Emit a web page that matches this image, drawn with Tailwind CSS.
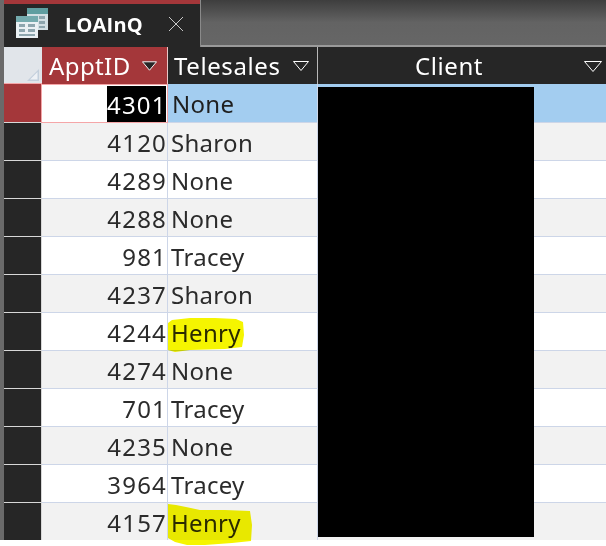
<!DOCTYPE html>
<html><head><meta charset="utf-8"><script src="https://cdn.jsdelivr.net/npm/@tailwindcss/browser@4"></script></head>
<body class="bg-white">
<div class="relative w-[606px] h-[546px] overflow-hidden bg-white font-['Noto_Sans',sans-serif] text-[24px] text-[#2b2b2b]">
  <div class="flex h-[47px] bg-[#636363]">
    <div class="w-[4px] bg-[#6a6a6a]"></div>
    <div class="w-[197px] flex flex-col border-r border-[#8a8a8a]">
      <div class="h-[4px] bg-[#a4373a]"></div>
      <div class="flex-1 bg-[#262626] relative">
        <svg class="absolute left-[11px] top-[4px]" width="34" height="32" viewBox="0 0 34 32">
          <rect x="12" y="0" width="21" height="22" fill="#d3e0e4"/><rect x="12" y="0" width="21" height="6" fill="#5f9ea0"/>
          <path d="M24 8h6v3h-6zM24 13h6v3h-6zM24 18h6v2h-6z" fill="#8ea6ae"/>
          <rect x="1" y="8" width="22" height="22" fill="#eaf0f3"/><rect x="1" y="8" width="22" height="6" fill="#5f9ea0" fill-opacity="0.85"/>
          <path d="M4 16h6v3h-6zM13 16h7v3h-7zM4 21h6v3h-6zM13 21h7v3h-7zM4 26h16v2H4z" fill="#8ea6ae"/>
        </svg>
        <span class="absolute left-[61px] top-[7px] text-[20px] leading-[28px] font-bold tracking-[0.2px] text-white font-['Open_Sans',sans-serif]">LOAInQ</span>
        <svg class="absolute left-[164px] top-[12px]" width="16" height="16" viewBox="0 0 16 16" fill="none" stroke="#c8c8c8" stroke-width="1"><path d="M1 1l14 14M15 1L1 15"/></svg>
      </div>
    </div>
    <div class="flex-1 bg-gradient-to-b from-[#3e3e3e] via-[#636363] to-[#666666] border-b-2 border-[#9a9a9a]"></div>
  </div>

  <div class="flex h-[37px] text-white bg-[#262626] tracking-[0.6px]">
    <div class="w-[4px] bg-[#6a6a6a]"></div>
    <div class="w-[38px] bg-[#e1e5ea] relative border-b border-[#f5a6a8]">
      <svg class="absolute right-[3px] bottom-[2px]" width="12" height="12" viewBox="0 0 12 12"><path d="M12 0V12H0Z" fill="#c3cfdc"/><path d="M10.5 3V10.5H3Z" fill="#eef1f5"/></svg>
    </div>
    <div class="w-[126px] bg-[#a4373a] flex items-center justify-between pl-[7px] pr-[10px] border-r border-[#e8c8c8]">
      <span class="tracking-[0.4px]">ApptID</span>
      <svg width="15" height="10" viewBox="0 0 16 10"><path d="M0.5 0.5H15.5L8 9.5Z" fill="#262626" stroke="#fff"/></svg>
    </div>
    <div class="w-[150px] flex items-center justify-between pl-[6px] pr-[8px] border-r border-[#b8b8b8]">
      <span>Telesales</span>
      <svg width="16" height="10" viewBox="0 0 16 10"><path d="M0.5 0.5H15.5L8 9.5Z" fill="#262626" stroke="#fff"/></svg>
    </div>
    <div class="flex-1 relative flex items-center justify-center pr-[26px]">
      <span>Client</span>
      <svg class="absolute right-[4px] top-[14px]" width="18" height="11" viewBox="0 0 18 11"><path d="M0.5 0.5H17.5L9 10.5Z" fill="#262626" stroke="#fff"/></svg>
    </div>
  </div>

  <div class="flex flex-col tracking-[0.3px]">
    <div class="flex h-[39px] bg-[#a3cdf0]">
      <div class="w-[4px] bg-[#6a6a6a]"></div>
      <div class="w-[37px] bg-[#a4373a] border-b border-[#d8d8d8]"></div>
      <div class="w-[127px] bg-white border border-[#f5a6a8] flex justify-end items-end text-white pr-[1px]"><span class="bg-black w-[59px] h-[36px] leading-[37px] text-right tracking-[1.2px]">4301</span></div>
      <div class="w-[150px] pl-[4px] pt-[1px] leading-[38px] text-[#1f1f1f] border-r border-b border-[#cdd6e8]">None</div>
      <div class="flex-1 border-b border-[#cdd6e8]"></div>
    </div>
    <div class="flex h-[38px] bg-[#f2f2f2]">
      <div class="w-[4px] bg-[#6a6a6a]"></div><div class="w-[38px] bg-[#262626] border-r border-b border-[#d8d8d8]"></div>
      <div class="w-[126px] border-r border-b border-[#cdd6e8] text-right leading-[39px] tracking-[1.2px]">4120</div>
      <div class="w-[150px] pl-[3px] leading-[39px] border-r border-b border-[#cdd6e8]">Sharon</div><div class="flex-1 border-b border-[#cdd6e8]"></div>
    </div>
    <div class="flex h-[38px] bg-white">
      <div class="w-[4px] bg-[#6a6a6a]"></div><div class="w-[38px] bg-[#262626] border-r border-b border-[#d8d8d8]"></div>
      <div class="w-[126px] border-r border-b border-[#cdd6e8] text-right leading-[39px] tracking-[1.2px]">4289</div>
      <div class="w-[150px] pl-[3px] leading-[39px] border-r border-b border-[#cdd6e8]">None</div><div class="flex-1 border-b border-[#cdd6e8]"></div>
    </div>
    <div class="flex h-[38px] bg-[#f2f2f2]">
      <div class="w-[4px] bg-[#6a6a6a]"></div><div class="w-[38px] bg-[#262626] border-r border-b border-[#d8d8d8]"></div>
      <div class="w-[126px] border-r border-b border-[#cdd6e8] text-right leading-[39px] tracking-[1.2px]">4288</div>
      <div class="w-[150px] pl-[3px] leading-[39px] border-r border-b border-[#cdd6e8]">None</div><div class="flex-1 border-b border-[#cdd6e8]"></div>
    </div>
    <div class="flex h-[38px] bg-white">
      <div class="w-[4px] bg-[#6a6a6a]"></div><div class="w-[38px] bg-[#262626] border-r border-b border-[#d8d8d8]"></div>
      <div class="w-[126px] border-r border-b border-[#cdd6e8] text-right leading-[39px] tracking-[1.2px]">981</div>
      <div class="w-[150px] pl-[3px] leading-[39px] border-r border-b border-[#cdd6e8]">Tracey</div><div class="flex-1 border-b border-[#cdd6e8]"></div>
    </div>
    <div class="flex h-[38px] bg-[#f2f2f2]">
      <div class="w-[4px] bg-[#6a6a6a]"></div><div class="w-[38px] bg-[#262626] border-r border-b border-[#d8d8d8]"></div>
      <div class="w-[126px] border-r border-b border-[#cdd6e8] text-right leading-[39px] tracking-[1.2px]">4237</div>
      <div class="w-[150px] pl-[3px] leading-[39px] border-r border-b border-[#cdd6e8]">Sharon</div><div class="flex-1 border-b border-[#cdd6e8]"></div>
    </div>
    <div class="flex h-[38px] bg-white">
      <div class="w-[4px] bg-[#6a6a6a]"></div><div class="w-[38px] bg-[#262626] border-r border-b border-[#d8d8d8]"></div>
      <div class="w-[126px] border-r border-b border-[#cdd6e8] text-right leading-[39px] tracking-[1.2px]">4244</div>
      <div class="w-[150px] pl-[3px] leading-[39px] border-r border-b border-[#cdd6e8]">Henry</div><div class="flex-1 border-b border-[#cdd6e8]"></div>
    </div>
    <div class="flex h-[38px] bg-[#f2f2f2]">
      <div class="w-[4px] bg-[#6a6a6a]"></div><div class="w-[38px] bg-[#262626] border-r border-b border-[#d8d8d8]"></div>
      <div class="w-[126px] border-r border-b border-[#cdd6e8] text-right leading-[39px] tracking-[1.2px]">4274</div>
      <div class="w-[150px] pl-[3px] leading-[39px] border-r border-b border-[#cdd6e8]">None</div><div class="flex-1 border-b border-[#cdd6e8]"></div>
    </div>
    <div class="flex h-[38px] bg-white">
      <div class="w-[4px] bg-[#6a6a6a]"></div><div class="w-[38px] bg-[#262626] border-r border-b border-[#d8d8d8]"></div>
      <div class="w-[126px] border-r border-b border-[#cdd6e8] text-right leading-[39px] tracking-[1.2px]">701</div>
      <div class="w-[150px] pl-[3px] leading-[39px] border-r border-b border-[#cdd6e8]">Tracey</div><div class="flex-1 border-b border-[#cdd6e8]"></div>
    </div>
    <div class="flex h-[38px] bg-[#f2f2f2]">
      <div class="w-[4px] bg-[#6a6a6a]"></div><div class="w-[38px] bg-[#262626] border-r border-b border-[#d8d8d8]"></div>
      <div class="w-[126px] border-r border-b border-[#cdd6e8] text-right leading-[39px] tracking-[1.2px]">4235</div>
      <div class="w-[150px] pl-[3px] leading-[39px] border-r border-b border-[#cdd6e8]">None</div><div class="flex-1 border-b border-[#cdd6e8]"></div>
    </div>
    <div class="flex h-[38px] bg-white">
      <div class="w-[4px] bg-[#6a6a6a]"></div><div class="w-[38px] bg-[#262626] border-r border-b border-[#d8d8d8]"></div>
      <div class="w-[126px] border-r border-b border-[#cdd6e8] text-right leading-[39px] tracking-[1.2px]">3964</div>
      <div class="w-[150px] pl-[3px] leading-[39px] border-r border-b border-[#cdd6e8]">Tracey</div><div class="flex-1 border-b border-[#cdd6e8]"></div>
    </div>
    <div class="flex h-[37px] bg-[#f2f2f2]">
      <div class="w-[4px] bg-[#6a6a6a]"></div><div class="w-[38px] bg-[#262626] border-r border-[#d8d8d8]"></div>
      <div class="w-[126px] border-r border-[#cdd6e8] text-right leading-[39px] tracking-[1.2px]">4157</div>
      <div class="w-[150px] pl-[3px] leading-[39px] border-r border-[#cdd6e8]">Henry</div><div class="flex-1"></div>
    </div>
  </div>
  <div class="absolute left-[318px] top-[87px] w-[216px] h-[450px] bg-black"></div>
  <svg class="absolute left-0 top-0 mix-blend-multiply pointer-events-none" width="606" height="546" viewBox="0 0 606 546">
    <path d="M168 323L172 320L190 318L215 318L236 319L243 322L244 335L242 347L225 349L190 350L175 352L168 350Z" fill="#f5f500"/>
    <path d="M168 504L176 505L186 507L200 510L225 510L250 511L252 525L251 541L232 543L205 545L187 545L175 542L168 538Z" fill="#f5f500"/>
  </svg>
</div>
</body></html>
